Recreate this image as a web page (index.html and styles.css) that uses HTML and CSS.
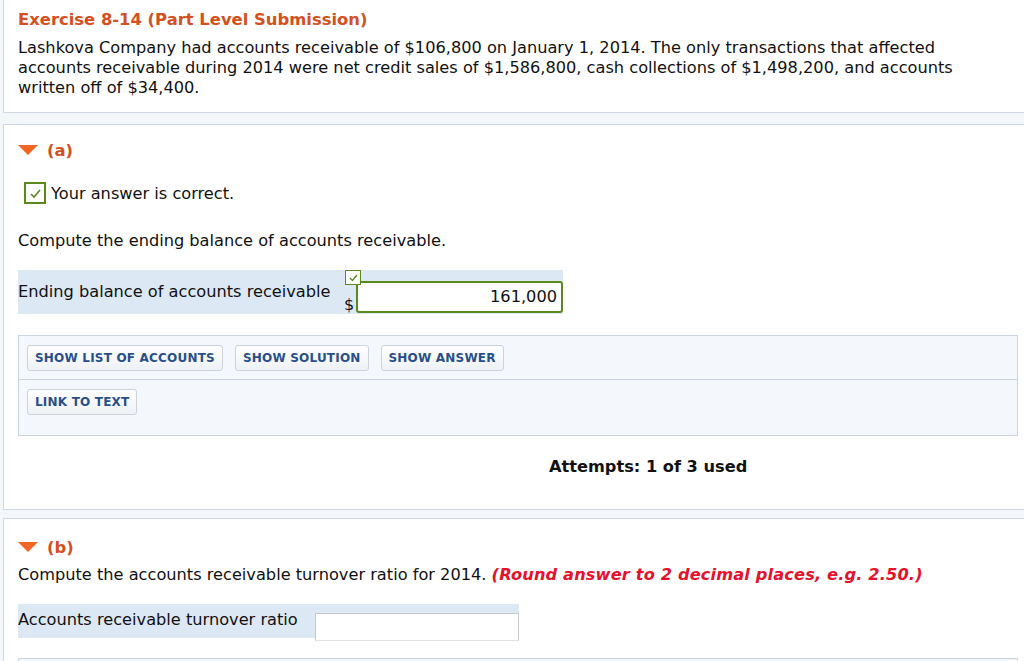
FILE: index.html
```html
<!DOCTYPE html>
<html>
<head>
<meta charset="utf-8">
<link rel="stylesheet" href="styles.css">
</head>
<body>
<div class="page">
  <section class="panel intro">
    <h1 class="title">Exercise 8-14 (Part Level Submission)</h1>
    <p class="text">Lashkova Company had accounts receivable of $106,800 on January 1, 2014. The only transactions that affected accounts receivable during 2014 were net credit sales of $1,586,800, cash collections of $1,498,200, and accounts written off of $34,400.</p>
  </section>

  <section class="panel part-a">
    <div class="part-head">
      <svg class="tri" width="20" height="11" viewBox="0 0 20 11"><polygon points="0,0 20,0 10,10" fill="#f26522"/></svg>
      <span class="part-label">(a)</span>
    </div>
    <div class="correct">
      <span class="check-box"><svg width="13" height="11" viewBox="0 0 13 11"><polyline points="2,6 5,9 11,2" fill="none" stroke="#5a8a1e" stroke-width="1.6"/></svg></span>
      <span>Your answer is correct.</span>
    </div>
    <p class="text q">Compute the ending balance of accounts receivable.</p>
    <div class="answer-row">
      <span class="answer-label">Ending balance of accounts receivable</span>
      <div class="field">
        <span class="mini-check"><svg width="11" height="9" viewBox="0 0 11 9"><polyline points="2,5 4.5,7.5 9,2" fill="none" stroke="#5a8a1e" stroke-width="1.4"/></svg></span>
        <span class="dollar">$</span>
        <span class="input ok">161,000</span>
      </div>
    </div>
    <div class="tools">
      <div class="tools-row">
        <span class="btn">SHOW LIST OF ACCOUNTS</span>
        <span class="btn">SHOW SOLUTION</span>
        <span class="btn">SHOW ANSWER</span>
      </div>
      <div class="tools-row second">
        <span class="btn">LINK TO TEXT</span>
      </div>
    </div>
    <div class="attempts">Attempts: 1 of 3 used</div>
  </section>

  <section class="panel part-b">
    <div class="part-head">
      <svg class="tri" width="20" height="11" viewBox="0 0 20 11"><polygon points="0,0 20,0 10,10" fill="#f26522"/></svg>
      <span class="part-label">(b)</span>
    </div>
    <p class="text q2">Compute the accounts receivable turnover ratio for 2014. <em class="hint">(Round answer to 2 decimal places, e.g. 2.50.)</em></p>
    <div class="answer-row b-row">
      <span class="answer-label">Accounts receivable turnover ratio</span>
      <span class="input empty"></span>
    </div>
    <div class="tools tail"></div>
  </section>
</div>
</body>
</html>
```
FILE: styles.css
```css
html, body {
  margin: 0;
  padding: 0;
}
body {
  background: #f4f7fa;
  overflow: hidden;
  width: 1024px;
  height: 661px;
  font-family: "DejaVu Sans", Verdana, sans-serif;
  color: #111;
}
.page {
  padding-left: 3px;
}
.panel {
  width: 1100px;
  background: #fff;
  border: 1px solid #cfd8e3;
  box-sizing: border-box;
  padding-left: 14px;
}
.intro {
  margin-top: -1px;
  height: 114px;
  padding-top: 10px;
}
.title {
  margin: 0;
  font-size: 16.4px;
  font-weight: bold;
  color: #d4501e;
  line-height: 20px;
}
.text {
  margin: 0;
  font-size: 16.2px;
  line-height: 20px;
  width: 960px;
}
.intro .text {
  margin-top: 8px;
}
.part-a {
  margin-top: 11px;
  height: 386px;
  padding-top: 15px;
}
.part-head {
  display: flex;
  align-items: center;
  height: 20px;
}
.tri {
  display: block;
  margin-right: 9px;
}
.part-label {
  font-size: 16.4px;
  font-weight: bold;
  color: #d4501e;
}
.correct {
  display: flex;
  align-items: center;
  margin-top: 22px;
  margin-left: 6px;
  font-size: 16.2px;
  height: 22px;
}
.check-box {
  width: 18px;
  height: 18px;
  border: 2px solid #5a8a1e;
  display: flex;
  align-items: center;
  justify-content: center;
  margin-right: 5px;
  background: #fff;
}
.q {
  margin-top: 27px;
}
.answer-row {
  margin-top: 19px;
  width: 545px;
  height: 44px;
  background: #dde8f5;
  display: flex;
  align-items: flex-start;
  box-sizing: border-box;
}
.answer-label {
  font-size: 16.2px;
  line-height: 20px;
  margin-top: 12px;
  width: 326px;
}
.field {
  position: relative;
  display: flex;
  align-items: flex-end;
  height: 44px;
}
.mini-check {
  position: absolute;
  left: 1px;
  top: 0;
  width: 14px;
  height: 13px;
  border: 1px solid #5a8a1e;
  background: #fff;
  display: flex;
  align-items: center;
  justify-content: center;
}
.dollar {
  font-size: 16px;
  line-height: 16px;
  margin-bottom: 1px;
  width: 12px;
}
.input {
  display: block;
  box-sizing: border-box;
  background: #fff;
  font-size: 16.2px;
  text-align: right;
}
.input.ok {
  width: 207px;
  height: 32px;
  border: 2px solid #5a8a1e;
  border-radius: 3px;
  line-height: 28px;
  padding-right: 4px;
  margin-bottom: 1px;
}
.tools {
  margin-top: 21px;
  width: 1000px;
  background: #f4f7fb;
  border: 1px solid #cbd5e1;
  box-sizing: border-box;
}
.tools-row {
  display: flex;
  gap: 12px;
  padding: 9px 0 8px 8px;
}
.tools-row.second {
  border-top: 1px solid #cbd5e1;
  padding-top: 9px;
  padding-bottom: 20px;
}
.btn {
  display: inline-block;
  font-size: 12px;
  font-weight: bold;
  color: #27508a;
  line-height: 24px;
  padding: 0 7px;
  border: 1px solid #ccd3dc;
  border-radius: 3px;
  background: linear-gradient(#ffffff, #eef1f5);
  letter-spacing: 0.2px;
}
.attempts {
  margin-top: 21px;
  margin-left: 531px;
  font-size: 16.2px;
  font-weight: bold;
  line-height: 20px;
}
.part-b {
  margin-top: 8px;
  height: 200px;
  padding-top: 18px;
}
.q2 {
  margin-top: 8px;
}
.hint {
  color: #e8102a;
  font-weight: bold;
  font-style: italic;
  letter-spacing: 0.15px;
}
.b-row {
  margin-top: 19px;
  width: 501px;
  height: 34px;
}
.b-row .answer-label {
  margin-top: 6px;
  width: 297px;
}
.input.empty {
  width: 204px;
  height: 28px;
  margin-top: 9px;
  border: 1px solid #c8c8c8;
  border-bottom-color: #e2e2e2;
}
.tail {
  margin-top: 20px;
  height: 30px;
}
```
